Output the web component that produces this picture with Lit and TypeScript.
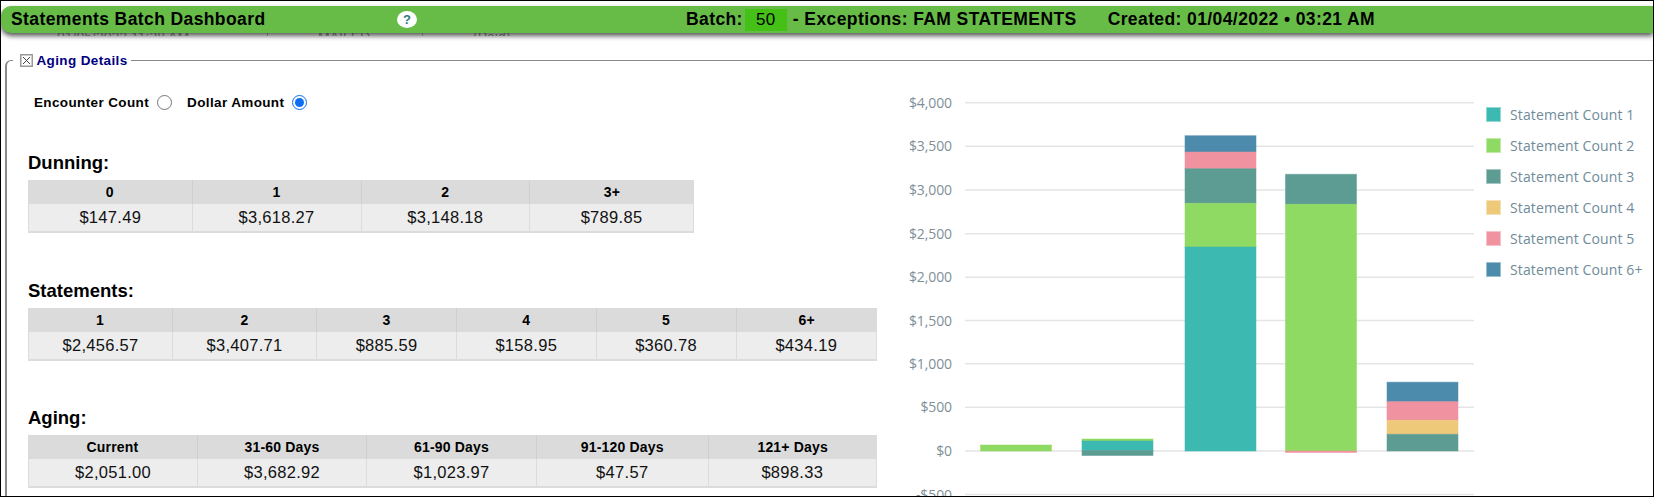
import { LitElement, html, css, svg } from "lit";
import { customElement } from "lit/decorators.js";

const COLORS = ["#3cb9b0", "#8fda62", "#5c9c92", "#eec97a", "#f192a0", "#4d8bad"];

type Cell = [string, string];
interface Section { title: string; cols: number[]; cells: Cell[] }

const SECTIONS: Section[] = [
  { title: "Dunning:", cols: [164.5, 169, 168.5, 164], cells: [["0", "$147.49"], ["1", "$3,618.27"], ["2", "$3,148.18"], ["3+", "$789.85"]] },
  { title: "Statements:", cols: [145, 144, 140, 139.5, 140, 140.5], cells: [["1", "$2,456.57"], ["2", "$3,407.71"], ["3", "$885.59"], ["4", "$158.95"], ["5", "$360.78"], ["6+", "$434.19"]] },
  { title: "Aging:", cols: [170, 169, 170, 171.5, 168.5], cells: [["Current", "$2,051.00"], ["31-60 Days", "$3,682.92"], ["61-90 Days", "$1,023.97"], ["91-120 Days", "$47.57"], ["121+ Days", "$898.33"]] },
];

const GRID = [
  ["$4,000", 102.7], ["$3,500", 146.2], ["$3,000", 190], ["$2,500", 233.7], ["$2,000", 277.3],
  ["$1,500", 320.5], ["$1,000", 363.7], ["$500", 407.3], ["$0", 451], ["-$500", 494.5],
] as [string, number][];

/* [colour index, top px, bottom px] per bar */
const BARS: { x: number; segs: [number, number, number][] }[] = [
  { x: 980, segs: [[1, 445, 451]] },
  { x: 1081.5, segs: [[1, 439, 441], [0, 441, 450.5], [2, 450.5, 455.5]] },
  { x: 1184.5, segs: [[5, 135.7, 152], [4, 152, 168.7], [2, 168.7, 203.3], [1, 203.3, 247], [0, 247, 451]] },
  { x: 1285, segs: [[2, 174.3, 204.3], [1, 204.3, 451], [4, 451, 452.5]] },
  { x: 1386.5, segs: [[5, 382.2, 401.7], [4, 401.7, 420.3], [3, 420.3, 434.3], [2, 434.3, 451]] },
];

@customElement("app-root")
export class AppRoot extends LitElement {
  static styles = css`
    :host { display: block; font-family: "Liberation Sans", Arial, sans-serif; color: #000; }
    .page { box-sizing: border-box; width: 1654px; height: 497px; border: 1px solid #000; padding-top: 5px; overflow: hidden; background: #fff; }
    .bar { position: relative; z-index: 2; display: flex; align-items: center; height: 27px; background: #66bc47; border-radius: 10px 0 0 10px; box-shadow: 0 3px 5px rgba(0, 0, 0, .65); font-weight: 700; font-size: 17.5px; letter-spacing: .4px; padding-left: 10px; }
    .bar-title { width: 386px; }
    .help { display: flex; align-items: center; justify-content: center; width: 20px; height: 17px; border-radius: 50%; background: #fff; color: #2b7d78; font-size: 13px; letter-spacing: 0; }
    .batch { margin-left: 269px; }
    .batch-no { width: 42px; height: 22px; margin: 0 6px 0 2px; display: flex; align-items: center; justify-content: center; background: #44c017; font-weight: 400; font-size: 17px; }
    .created { margin-left: 31px; }
    .peek { display: flex; height: 3px; overflow: hidden; font-size: 14px; line-height: 8px; color: #999; }
    .peek span { height: 3px; border-right: 1px solid #bbb; box-sizing: border-box; }
    .p1 { width: 267px; padding-left: 56px; } .p2 { width: 155px; padding-left: 50px; } .p3 { padding-left: 50px; border: 0 !important; }
    fieldset { box-sizing: border-box; margin: 18px 0 0 4px; padding: 0; height: 460px; border: 1px solid #8a8a8a; border-left-width: 2px; border-right: 0; border-radius: 6px 0 0 0; min-width: 0; }
    legend { display: flex; align-items: center; gap: 4px; margin-left: 6px; padding: 0 3px 0 6.5px; height: 13px; color: #000080; font-weight: 700; font-size: 13.5px; letter-spacing: .37px; }
    .check { display: block; width: 13px; height: 13px; }
    .content { display: flex; padding: 23px 0 0 21px; }
    .left { width: 849px; flex: none; display: flex; flex-direction: column; }
    .radios { display: flex; align-items: center; height: 24px; margin: 0 0 38px 6px; font-weight: 700; font-size: 13.5px; letter-spacing: .37px; }
    .radios input { width: 15px; height: 15px; margin: 0 15.5px 0 7.5px; accent-color: #0a6ff2; }
    .sections { display: flex; flex-direction: column; gap: 46.5px; }
    h3 { margin: 0 0 6px; font-size: 18.5px; line-height: 22px; font-weight: 700; }
    .table { display: grid; text-align: center; box-sizing: border-box; }
    .th, .td { display: flex; align-items: center; justify-content: center; box-sizing: border-box; }
    .th { height: 24px; background: #dbdbdb; font-weight: 700; font-size: 14px; letter-spacing: .2px; border-right: 1px solid #cfcfcf; }
    .td { height: 29px; background: #ededed; color: #111; font-size: 16.5px; letter-spacing: .3px; border-right: 1px solid #dcdcdc; border-bottom: 2px solid #dcdcdc; }
    .td.first { border-left: 1px solid #dcdcdc; }
    .th.last { border-right: 0; }
    .chart { display: block; flex: none; margin-left: 3px; width: 600px; height: 406px; overflow: visible; }
    .chart text { font-family: "Open Sans", sans-serif; font-size: 14px; fill: #7f8f99; letter-spacing: -.1px; }
    .legend-list { display: flex; flex-direction: column; gap: 11px; margin: 14.5px 0 0 6px; font-family: "Open Sans", sans-serif; font-size: 14px; color: #6f8b99; white-space: nowrap; letter-spacing: .12px; }
    .lg { display: flex; align-items: center; gap: 9px; height: 20px; }
    .sw { width: 15px; height: 15px; box-sizing: border-box; flex: none; border: 1px solid rgba(255, 255, 255, .45); }
  `;

  private chart() {
    return html`<svg class="chart" viewBox="880 90 600 406" aria-hidden="true">
      ${GRID.map(([t, y]) => svg`
        <line x1="965" x2="1474" y1=${y} y2=${y} stroke="#e5e5e5" stroke-width="1.5"></line>
        <text x="952" y=${y + 5} text-anchor="end">${t}</text>`)}
      ${BARS.map((b) => b.segs.map(([c, t, bt]) => svg`
        <rect x=${b.x + 0.5} y=${t} width="71" height=${bt - t} fill=${COLORS[c]} stroke=${COLORS[c]} stroke-opacity=".5" stroke-width="1"></rect>`))}
    </svg>`;
  }

  render() {
    return html`<div class="page">
      <div class="bar">
        <span class="bar-title">Statements Batch Dashboard</span>
        <span class="help">?</span>
        <span class="batch">Batch:</span>
        <span class="batch-no">50</span>
        <span>- Exceptions: FAM STATEMENTS</span>
        <span class="created">Created: 01/04/2022 • 03:21 AM</span>
      </div>
      <div class="peek"><span class="p1">01/05/2022 11:38 AM</span><span class="p2">MAILED</span><span class="p3">(Paid)</span></div>
      <fieldset>
        <legend>
          <svg class="check" viewBox="0 0 13 13" aria-hidden="true">
            <rect x=".75" y=".75" width="11.5" height="11.5" fill="#fff" stroke="#9a9a9a" stroke-width="1.5"></rect>
            <path d="M3 3l7 7M10 3l-7 7" stroke="#444" stroke-width="1" fill="none"></path>
          </svg>
          <span>Aging Details</span>
        </legend>
        <div class="content">
          <div class="left">
            <div class="radios">
              <label for="rc">Encounter Count</label><input id="rc" type="radio" name="mode" />
              <label for="rd">Dollar Amount</label><input id="rd" type="radio" name="mode" checked />
            </div>
            <div class="sections">
              ${SECTIONS.map((s) => html`<section>
                <h3>${s.title}</h3>
                <div class="table" style="grid-template-columns:${s.cols.map((c) => c + "px").join(" ")}">
                  ${s.cells.map(([h], i) => html`<div class="th ${i === s.cells.length - 1 ? "last" : ""}">${h}</div>`)}
                  ${s.cells.map(([, v], i) => html`<div class="td ${i === 0 ? "first" : ""}">${v}</div>`)}
                </div>
              </section>`)}
            </div>
          </div>
          ${this.chart()}
          <div class="legend-list">
            ${COLORS.map((c, i) => html`<div class="lg"><span class="sw" style="background:${c}"></span>Statement Count ${i === 5 ? "6+" : i + 1}</div>`)}
          </div>
        </div>
      </fieldset>
    </div>`;
  }
}
